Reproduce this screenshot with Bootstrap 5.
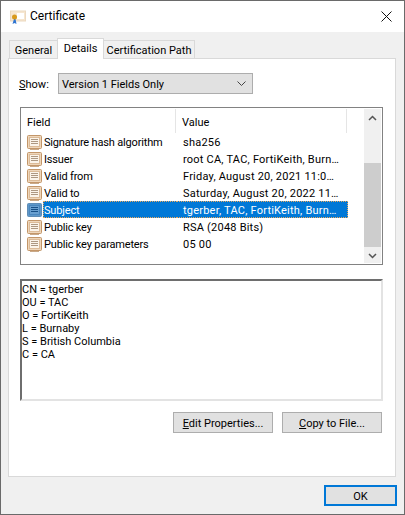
<!DOCTYPE html>
<html lang="en">
<head>
<meta charset="utf-8">
<title>Certificate</title>
<link href="https://cdn.jsdelivr.net/npm/bootstrap@5.3.0/dist/css/bootstrap.min.css" rel="stylesheet">
<style>
html,body{margin:0;height:515px;overflow:hidden;background:#6a6a6a}
body{font-family:"Roboto","Open Sans",sans-serif;font-size:11px;line-height:17px;color:#000}
.dlg{margin:1px 1px 0 1px;height:513px;background:#f0f0f0;display:flex;flex-direction:column}
.dlg-title{height:31px;background:#fff;padding:0 9px;gap:4px;font-size:12px}
.dlg-x{margin-left:auto;margin-right:3px}
.dlg-body{padding:6px 8px 0 7px;flex:1;display:flex;flex-direction:column}
.tabrow{height:20px;align-items:flex-end;padding-left:1px;gap:0;border:0;flex-wrap:nowrap}
.tabitem{height:18px;background:#f0f0f0;border:1px solid #d9d9d9;border-bottom:0;margin-right:-1px;line-height:20px;text-align:center;color:#000;white-space:nowrap}
.tab-a{width:49px}
.tab-b{width:47px;height:21px;background:#fff;position:relative;z-index:1;margin-bottom:-1px;line-height:19px}
.tab-c{width:92px}
.panel-pg{height:419px;background:#fff;border:1px solid #d9d9d9;padding:14px 12px 0 11px}
.showrow{height:21px;gap:6px}
.showlbl{width:33px;margin-left:-1px;padding-top:2px}
.fake-sel{width:195px;height:21px;background:#e1e1e1;border:1px solid #adadad;padding:0 6px 0 3px;line-height:19px}
.sel-text{padding-top:2px}
.lv{height:158px;margin-top:13px;border:1px solid #828282;background:#fff;display:flex}
.lv-main{flex:1;min-width:0;display:flex;flex-direction:column;padding-top:1px}
.lv-head{height:24px;display:flex;align-items:center;flex:none}
.lv-head>div{height:100%;display:flex;align-items:center;border-right:1px solid #e5e5e5;padding-top:2px}
.cell-f{width:155px;flex:none;padding-left:6px}
.cell-v{width:171px;flex:none;padding-left:6px}
.lv-row{height:17px;display:flex;align-items:center;white-space:nowrap;padding-left:6px}
.lv-row .ico{flex:none;margin-right:0}
.lv-name{width:134px;flex:none;padding-left:1px;height:17px;line-height:19px;letter-spacing:-.17px}
.lv-val{width:171px;flex:none;padding-left:6px;overflow:hidden;height:17px;line-height:19px;letter-spacing:.22px}
.lv-row.sel .lv-name,.lv-row.sel .lv-val{background:#0078d7;color:#fff}
.lv-row.sel .lv-name{border:1px dotted #e8a860;border-right:0;line-height:17px;padding-left:0}
.lv-row.sel .lv-val{border:1px dotted #e8a860;border-left:0;line-height:17px;padding-left:6px}
.sb{width:17px;flex:none;background:#f0f0f0;margin:1px;display:flex;flex-direction:column;align-items:center}
.sb-btn{height:17px;flex:none;display:flex;align-items:center;justify-content:center}
.sb-gap{height:37px;flex:none}
.sb-thumb{height:84px;width:100%;background:#cdcdcd;flex:none}
.sb-fill{flex:1}
.detail{height:122px;margin-top:14px;background:#fff;border:2px solid #e3e3e3;border-top-color:#6e6e6e;border-left-color:#6e6e6e;padding:2px 0 0 0;line-height:13px}
.act{margin-top:11px;gap:9px;justify-content:flex-end;padding-right:1px}
.winbtn{height:21px;background:#e1e1e1;border:1px solid #adadad;border-radius:0;color:#000;font-size:11px;line-height:17px;padding:2px 0 0;width:100px}
.okrow{margin-top:8px;justify-content:flex-end;margin-right:-1px}
.okbtn{width:73px;height:21px;background:#e1e1e1;border:2px solid #0078d7;border-radius:0;color:#000;font-size:11px;line-height:15px;padding:1px 0 0}
</style>
</head>
<body>
<svg width="0" height="0" class="position-absolute">
<defs>
<symbol id="fld" viewBox="0 0 16 16">
<rect x=".5" y="1.500" width="14" height="13" rx="1" fill="#eed6ba" stroke="#c39669"/>
<rect x="2.500" y="3.500" width="10" height="9" fill="#fbf4ea" stroke="#dcbb98"/>
<path d="M4 5.500h7M4 7.500h7M4 9.500h7" stroke="#ad9882"/>
<path d="M3 15.500h9" stroke="#c9a988"/>
</symbol>
<symbol id="fldsel" viewBox="0 0 16 16">
<rect x=".5" y="1.500" width="14" height="13" rx="1" fill="#5d97c9" stroke="#5f8cb5"/>
<rect x="2.500" y="3.500" width="10" height="9" fill="#6aa0d0" stroke="#4a86bd"/>
<path d="M4 5.500h7M4 7.500h7M4 9.500h7" stroke="#174f86"/>
</symbol>
</defs>
</svg>
<div class="dlg">
  <div class="dlg-title d-flex align-items-center">
    <svg width="16" height="16" viewBox="0 0 16 16"><rect x=".5" y="2" width="15" height="10" fill="#f6e6d0" stroke="#ecd9bf"/><rect x="7" y="4" width="7" height="6" fill="#fff"/><path d="M4 10l-1.500 5 2-1 2 1L5.500 10z" fill="#2f74d0"/><circle cx="4.500" cy="8" r="2.500" fill="#d99a1c"/></svg>
    <span>Certificate</span>
    <svg class="dlg-x" width="11" height="11" viewBox="0 0 11 11"><path d="M.5.500l10 10M10.500.500l-10 10" stroke="#111" fill="none"/></svg>
  </div>
  <div class="dlg-body">
    <ul class="nav tabrow d-flex">
      <li class="tabitem tab-a">General</li>
      <li class="tabitem tab-b">Details</li>
      <li class="tabitem tab-c">Certification Path</li>
    </ul>
    <div class="panel-pg">
      <div class="showrow d-flex align-items-center">
        <span class="showlbl"><u>S</u>how:</span>
        <div class="fake-sel d-flex align-items-center justify-content-between">
          <span class="sel-text">Version 1 Fields Only</span>
          <svg width="9" height="6" viewBox="0 0 9 6"><path d="M.5.500l4 4 4-4" fill="none" stroke="#444"/></svg>
        </div>
      </div>
      <div class="lv">
        <div class="lv-main">
          <div class="lv-head"><div class="cell-f">Field</div><div class="cell-v">Value</div></div>
          <div class="lv-row"><svg class="ico" width="16" height="16"><use href="#fld"/></svg><div class="lv-name">Signature hash algorithm</div><div class="lv-val">sha256</div></div>
          <div class="lv-row"><svg class="ico" width="16" height="16"><use href="#fld"/></svg><div class="lv-name">Issuer</div><div class="lv-val">root CA, TAC, FortiKeith, Burn…</div></div>
          <div class="lv-row"><svg class="ico" width="16" height="16"><use href="#fld"/></svg><div class="lv-name">Valid from</div><div class="lv-val">Friday, August 20, 2021 11:0…</div></div>
          <div class="lv-row"><svg class="ico" width="16" height="16"><use href="#fld"/></svg><div class="lv-name">Valid to</div><div class="lv-val">Saturday, August 20, 2022 11…</div></div>
          <div class="lv-row sel"><svg class="ico" width="16" height="16"><use href="#fldsel"/></svg><div class="lv-name">Subject</div><div class="lv-val">tgerber, TAC, FortiKeith, Burn…</div></div>
          <div class="lv-row"><svg class="ico" width="16" height="16"><use href="#fld"/></svg><div class="lv-name">Public key</div><div class="lv-val">RSA (2048 Bits)</div></div>
          <div class="lv-row"><svg class="ico" width="16" height="16"><use href="#fld"/></svg><div class="lv-name">Public key parameters</div><div class="lv-val">05 00</div></div>
        </div>
        <div class="sb">
          <div class="sb-btn"><svg width="9" height="6" viewBox="0 0 9 6"><path d="M1 5l3.500-3.500L8 5" fill="none" stroke="#555" stroke-width="1.500"/></svg></div>
          <div class="sb-gap"></div>
          <div class="sb-thumb"></div>
          <div class="sb-fill"></div>
          <div class="sb-btn"><svg width="9" height="6" viewBox="0 0 9 6"><path d="M1 1l3.500 3.500L8 1" fill="none" stroke="#555" stroke-width="1.500"/></svg></div>
        </div>
      </div>
      <div class="detail">CN = tgerber<br>OU = TAC<br>O = FortiKeith<br>L = Burnaby<br>S = British Columbia<br>C = CA</div>
      <div class="act d-flex">
        <button type="button" class="btn winbtn"><u>E</u>dit Properties...</button>
        <button type="button" class="btn winbtn"><u>C</u>opy to File...</button>
      </div>
    </div>
    <div class="okrow d-flex"><button type="button" class="btn okbtn">OK</button></div>
  </div>
</div>
<script src="https://cdn.jsdelivr.net/npm/bootstrap@5.3.0/dist/js/bootstrap.bundle.min.js"></script>
</body>
</html>
